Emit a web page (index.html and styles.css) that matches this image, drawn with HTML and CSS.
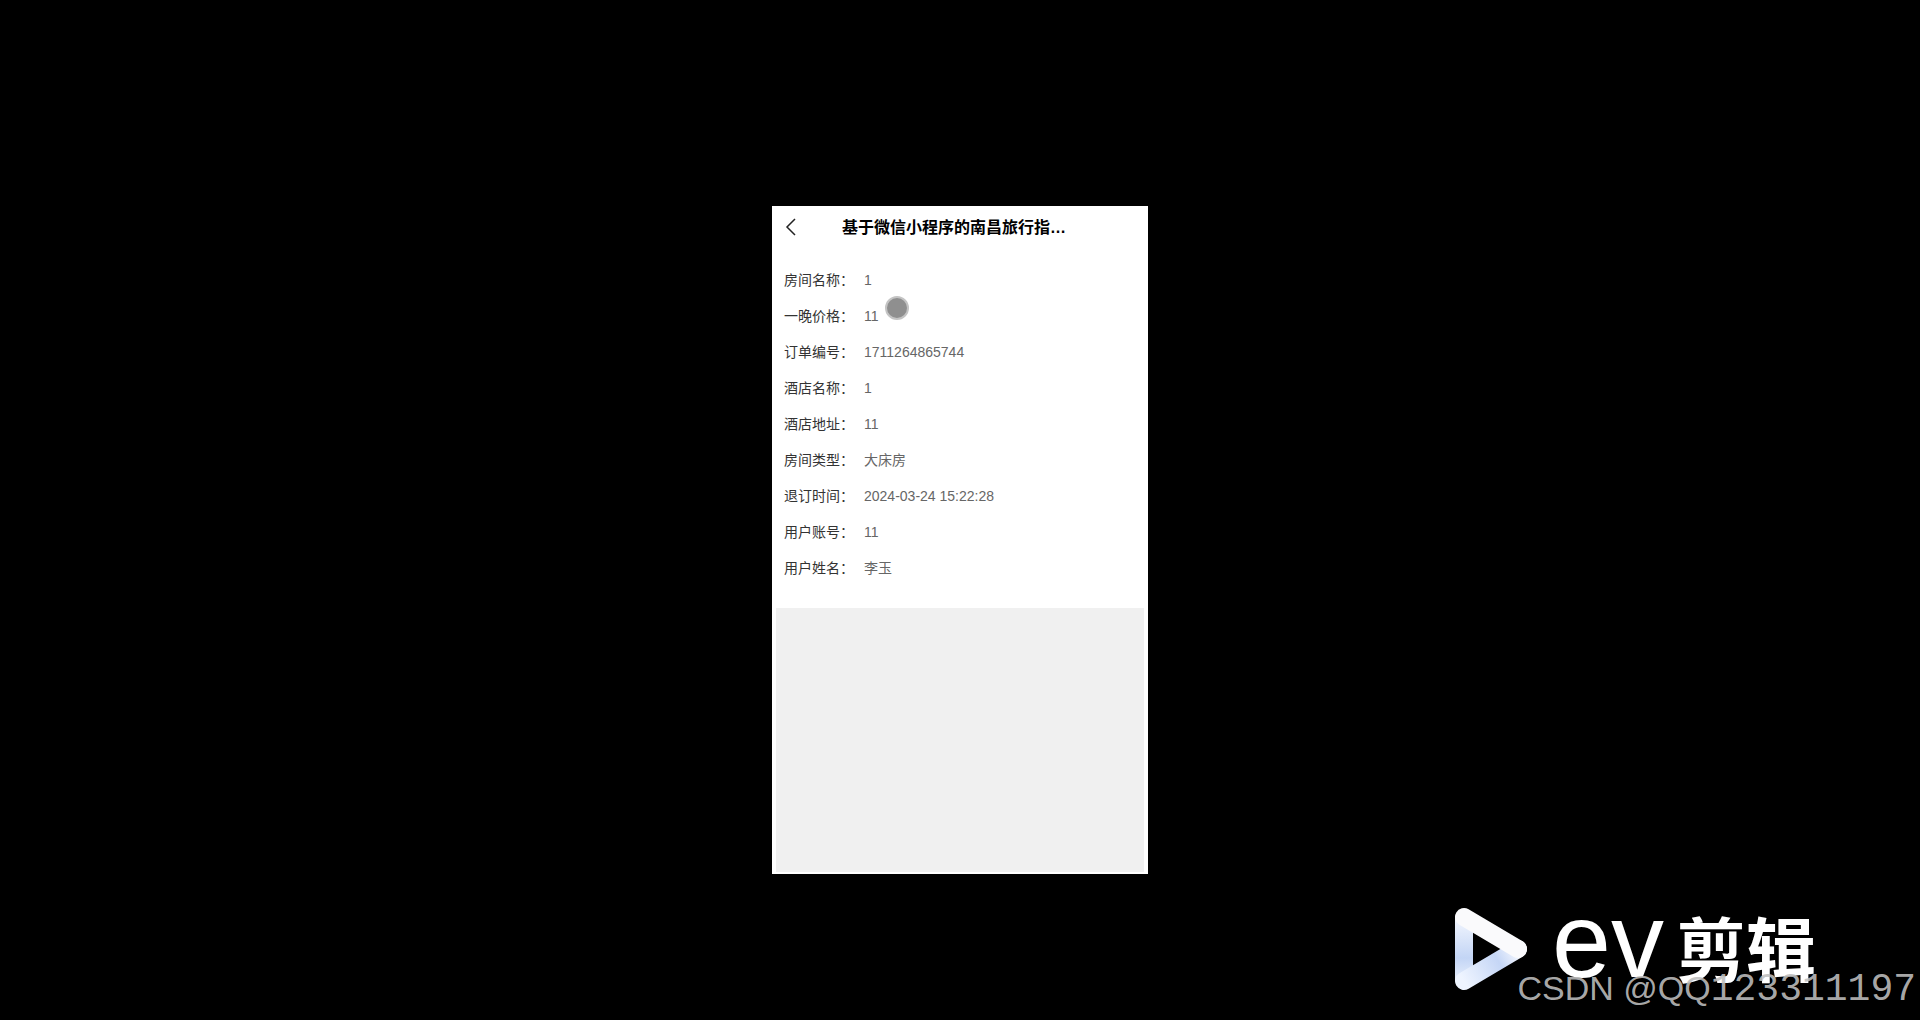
FILE: index.html
```html
<!DOCTYPE html>
<html lang="zh-CN">
<head>
    <meta charset="UTF-8">
    <title>订单详情</title>
    <link rel="stylesheet" href="styles.css">
</head>
<body>
    <main class="phone">
        <header class="navBar">
            <button type="button" class="backBtn" aria-label="返回">
                <svg width="12" height="18" viewBox="0 0 12 18">
                    <path d="M11 1 L3 9 L11 17" fill="none" stroke="#222" stroke-width="1.5"/>
                </svg>
            </button>
            <h1 class="navTitle">基于微信小程序的南昌旅行指…</h1>
        </header>
        <dl class="detail">
            <div class="row"><dt>房间名称：</dt><dd>1</dd></div>
            <div class="row"><dt>一晚价格：</dt><dd>11</dd></div>
            <div class="row"><dt>订单编号：</dt><dd>1711264865744</dd></div>
            <div class="row"><dt>酒店名称：</dt><dd>1</dd></div>
            <div class="row"><dt>酒店地址：</dt><dd>11</dd></div>
            <div class="row"><dt>房间类型：</dt><dd>大床房</dd></div>
            <div class="row"><dt>退订时间：</dt><dd>2024-03-24 15:22:28</dd></div>
            <div class="row"><dt>用户账号：</dt><dd>11</dd></div>
            <div class="row"><dt>用户姓名：</dt><dd>李玉</dd></div>
        </dl>
        <div class="blank"></div>
        <span class="touch"></span>
    </main>

    <div class="evLogo">
        <svg width="74" height="84" viewBox="0 0 74 84">
            <defs>
                <linearGradient id="side" x1="0" y1="0" x2="0" y2="1">
                    <stop offset="0" stop-color="#f4f7fe"/>
                    <stop offset="0.65" stop-color="#c3d5f5"/>
                    <stop offset="1" stop-color="#e6eefc"/>
                </linearGradient>
                <linearGradient id="bottom" gradientUnits="userSpaceOnUse" x1="10" y1="74" x2="62" y2="42">
                    <stop offset="0" stop-color="#eef4ff"/>
                    <stop offset="0.65" stop-color="#c5d6f6"/>
                    <stop offset="1" stop-color="#f4f7fe"/>
                </linearGradient>
            </defs>
            <path d="M1 10 H19 V73 H1 Z" fill="url(#side)"/>
            <path d="M10 74 L64 42" stroke="url(#bottom)" stroke-width="18" stroke-linecap="round"/>
            <path d="M10 10 L64 42" stroke="#fafafc" stroke-width="18" stroke-linecap="round"/>
        </svg>
        <span class="evName">ev</span>
        <span class="evText">剪辑</span>
    </div>
    <div class="watermark">CSDN @QQ<span class="num">123311197</span></div>
</body>
</html>
```

FILE: styles.css
```css
* {
    box-sizing: border-box;
}
body {
    margin: 0;
    min-height: 100vh;
    padding: 206px 0 146px;
    background: #000;
    overflow: hidden;
    font-family: "Liberation Sans", "Noto Sans CJK SC", sans-serif;
    font-size: 14px;
}

.phone {
    position: relative;
    display: flex;
    flex-direction: column;
    width: 376px;
    min-height: 668px;
    margin: 0 auto;
    background: #fff;
}

.navBar {
    display: flex;
    align-items: center;
    height: 42px;
    padding-left: 12px;
}
.backBtn {
    display: flex;
    width: 58px;
    padding: 0;
    border: 0;
    background: none;
    cursor: pointer;
}
.navTitle {
    margin: 0;
    padding-top: 2px;
    font-size: 16px;
    line-height: 24px;
    color: #000;
}

.detail {
    margin: 0;
    padding: 14px 12px 22px;
}
.row {
    display: flex;
    line-height: 36px;
}
.row dt {
    width: 80px;
    color: #333;
}
.row dd {
    margin: 0;
    color: #666;
}

.blank {
    flex: 1;
    margin: 0 4px 2px;
    background: #f0f0f0;
}

/* 模拟触摸点 */
.touch {
    position: absolute;
    left: 113px;
    top: 90px;
    width: 24px;
    height: 24px;
    border-radius: 50%;
    border: 2px solid #c4c4c4;
    background: #8f8f8f;
}

/* 右下角水印 */
.evLogo {
    position: absolute;
    right: 104px;
    bottom: 29px;
    display: flex;
    align-items: center;
    height: 84px;
    color: #fff;
}
.evName {
    margin-left: 24px;
    font-size: 106px;
    line-height: 84px;
    padding-bottom: 18px;
}
.evText {
    margin-left: 12px;
    padding-top: 8px;
    font-size: 70px;
    font-weight: 700;
    line-height: 84px;
}
.watermark {
    position: absolute;
    right: 4px;
    bottom: 10px;
    font-size: 34px;
    line-height: 40px;
    color: rgba(190, 190, 190, 0.9);
    white-space: nowrap;
}
.num {
    font-family: "Liberation Mono", monospace;
    font-size: 38px;
}
```
